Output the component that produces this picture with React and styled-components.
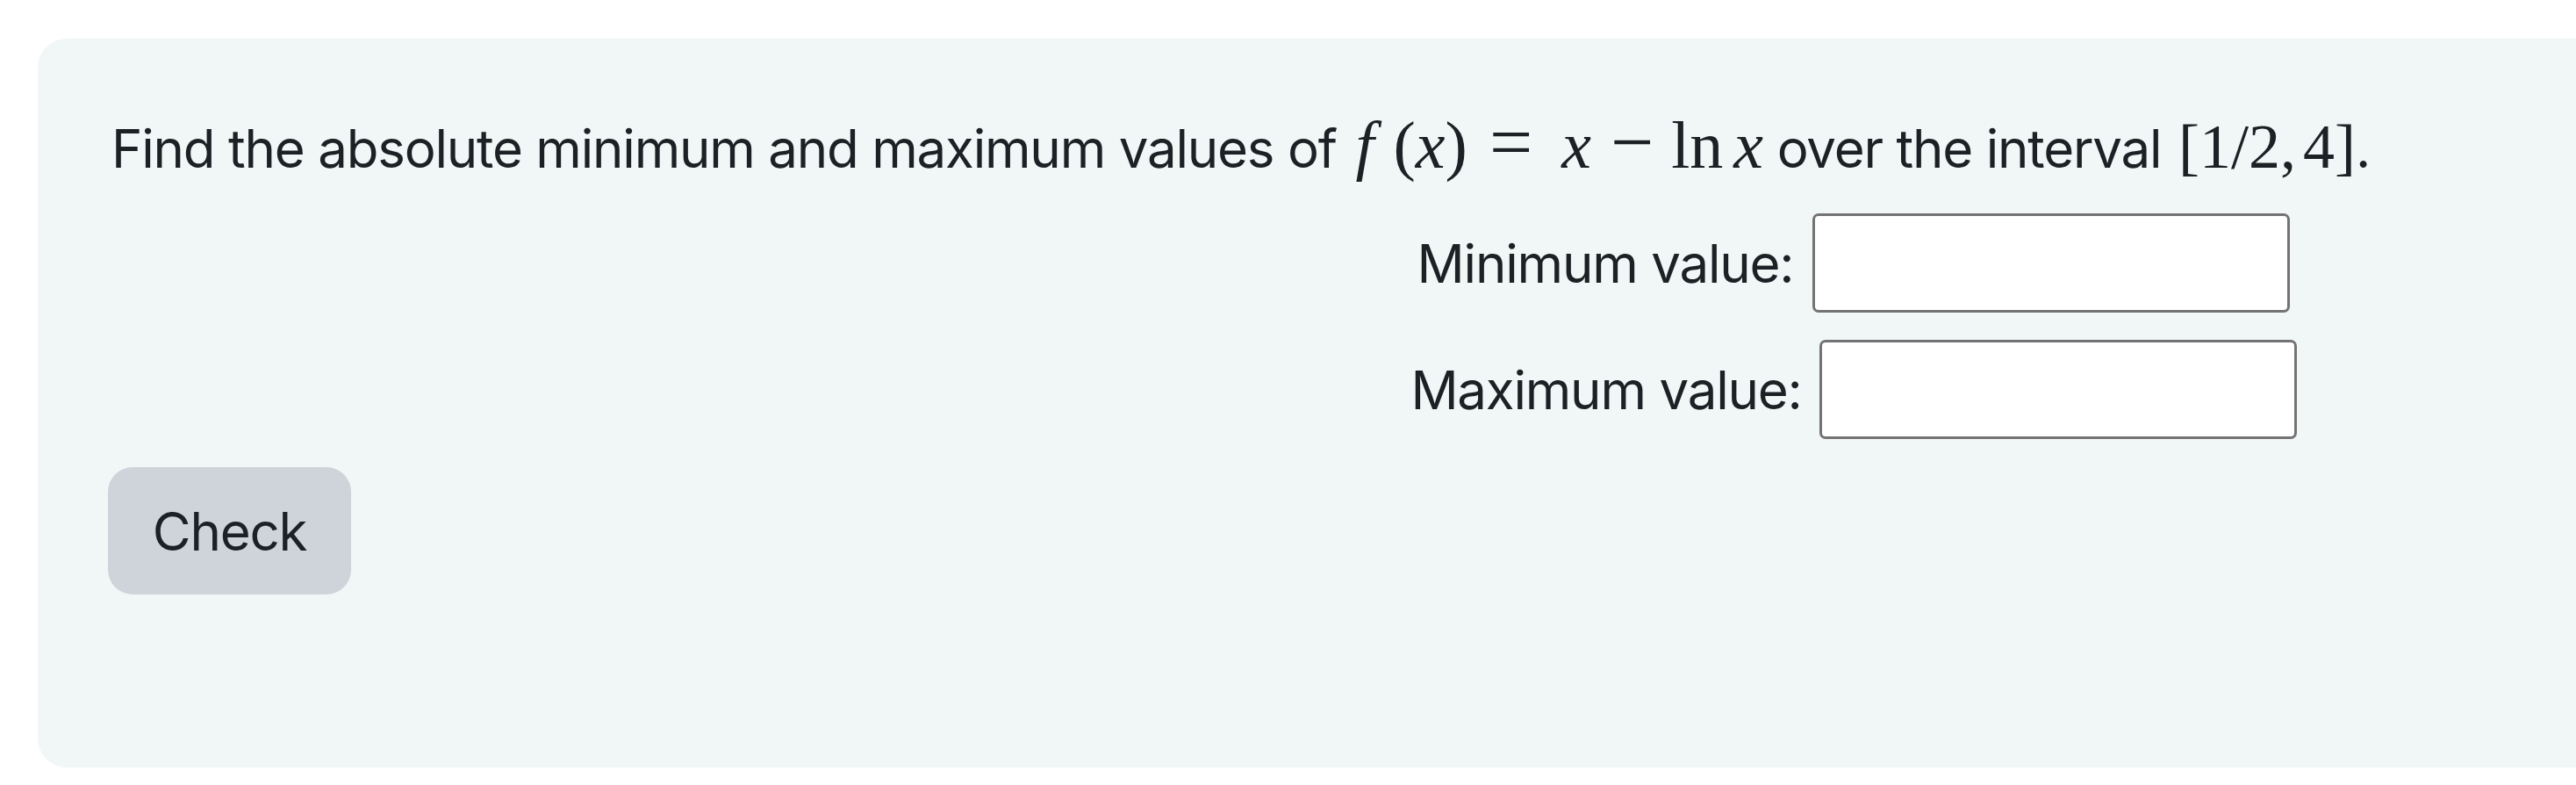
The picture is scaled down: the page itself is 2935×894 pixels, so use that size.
import React from "react";
import styled, { createGlobalStyle } from "styled-components";

const GlobalStyle = createGlobalStyle`
  html, body {
    margin: 0;
    padding: 0;
    background: #ffffff;
    overflow: hidden;
  }
  body {
    font-family: Inter, "Noto Sans", "Liberation Sans", sans-serif;
    color: #1d2125;
  }
`;

const Page = styled.div`
  padding: 44px 0 0 43px;
  width: 4300px;
`;

const Card = styled.section`
  width: 4138px;
  box-sizing: border-box;
  background: #f1f6f6;
  border-radius: 33px;
  padding: 80px 84px 197px;
`;

const Prompt = styled.p`
  margin: 0;
  font-size: 60px;
  line-height: 90px;
  letter-spacing: -1.2px;
  white-space: nowrap;
`;

const Math = styled.span`
  font-family: "Liberation Serif", "DejaVu Serif", serif;
  font-size: ${(p) => p.$size || 76}px;
  line-height: 0;
  letter-spacing: 0;
  margin-left: ${(p) => p.$l || 0}px;
`;

const Mi = styled.i`
  font-style: italic;
  margin-right: ${(p) => p.$r || 0}px;
  margin-left: ${(p) => p.$l || 0}px;
`;

const Mo = styled.span`
  margin-left: ${(p) => p.$l || 0}px;
  margin-right: ${(p) => p.$r || 0}px;
  font-size: ${(p) => (p.$big ? "1.15em" : "1em")};
`;

const Fields = styled.div`
  display: flex;
  flex-direction: column;
  align-items: center;
  gap: 31px;
  margin-top: 29px;
`;

const FieldRow = styled.label`
  display: flex;
  align-items: center;
  gap: ${(p) => p.$gap}px;
  font-size: 60px;
  line-height: 90px;
  letter-spacing: -1.2px;
`;

const Input = styled.input`
  width: 544px;
  height: 113px;
  box-sizing: border-box;
  border: 3px solid #737373;
  border-radius: 7px;
  background: #ffffff;
  font-size: 60px;
  padding: 0 16px;
  outline: none;
`;

const Actions = styled.div`
  margin-top: 32px;
  margin-left: -4px;
`;

const CheckButton = styled.button`
  width: 277px;
  height: 145px;
  padding: 0;
  border: none;
  border-radius: 28px;
  background: #ced4da;
  color: #1d2125;
  font-family: Inter, "Noto Sans", "Liberation Sans", sans-serif;
  font-size: 60px;
  line-height: 90px;
  letter-spacing: -1.2px;
  cursor: pointer;
`;

export default function App() {
  return (
    <>
      <GlobalStyle />
      <Page>
        <Card>
          <Prompt>
            Find the absolute minimum and maximum values of{" "}
            <Math $l={6}>
              <Mi $r={22}>f</Mi>
              <Mo>(</Mo>
              <Mi>x</Mi>
              <Mo>)</Mo>
              <Mo $big $l={25} $r={33}>=</Mo>
              <Mi>x</Mi>
              <Mo $big $l={22} $r={20}>−</Mo>
              <Mo $r={12}>ln</Mo>
              <Mi>x</Mi>
            </Math>{" "}
            over the interval{" "}
            <Math $size={72} $l={4}>
              <Mo>[1/2,</Mo>
              <Mo $l={8}>4]</Mo>
            </Math>
            .
          </Prompt>
          <Fields>
            <FieldRow $gap={22}>
              Minimum value:
              <Input type="text" aria-label="Minimum value" />
            </FieldRow>
            <FieldRow $gap={20}>
              Maximum value:
              <Input type="text" aria-label="Maximum value" />
            </FieldRow>
          </Fields>
          <Actions>
            <CheckButton type="button">Check</CheckButton>
          </Actions>
        </Card>
      </Page>
    </>
  );
}
